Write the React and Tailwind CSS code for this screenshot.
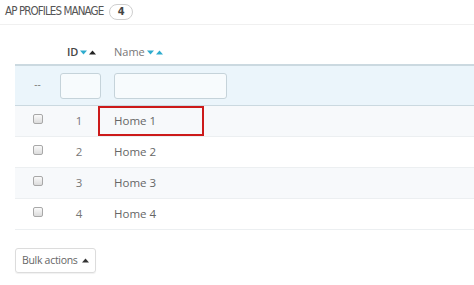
import React from "react";

const Down = ({ c }) => (
  <svg width="7" height="5" viewBox="0 0 7 5" className="inline-block"><path d="M0 0.5h7L3.5 4.5z" fill={c} /></svg>
);
const Up = ({ c }) => (
  <svg width="7" height="5" viewBox="0 0 7 5" className="inline-block"><path d="M0 4.5h7L3.5 0.5z" fill={c} /></svg>
);

const Checkbox = () => (
  <div className="w-[10px] h-[10px] rounded-[2px] border border-[#a8a8a8] bg-gradient-to-b from-[#fafafa] to-[#dcdcdc]" />
);

export default function App() {
  const rows = [1, 2, 3, 4];
  return (
    <div className="w-[474px] h-[285px] bg-white overflow-hidden text-[#666]" style={{ fontFamily: '"Open Sans", sans-serif' }}>
      <div className="h-[25px] border-b border-[#f0f0f0] flex items-center pl-[5px]">
        <span className="text-[11.5px] text-[#555] tracking-[-0.9px]" style={{ fontFamily: '"DejaVu Sans Condensed", "DejaVu Sans", sans-serif' }}>AP PROFILES MANAGE</span>
        <span className="ml-[6px] h-[16px] w-[24px] rounded-full border border-[#cfcfcf] flex items-center justify-center text-[11px] font-bold text-[#444]" style={{ fontFamily: '"DejaVu Sans Condensed", sans-serif' }}>4</span>
      </div>
      <div className="ml-[15px] mt-[15px]">
        <div className="h-[24px] flex items-center text-[11px]">
          <div className="w-[52px]" />
          <div className="w-[47px] flex items-center gap-[2px] font-semibold text-[#444]">
            <span>ID</span><Down c="#2eacce" /><Up c="#222" />
          </div>
          <div className="flex items-center gap-[2px] text-[#777]">
            <span>Name</span><Down c="#2eacce" /><Up c="#2eacce" />
          </div>
        </div>
        <div className="h-[42px] bg-[#ebf5fb] border-t-2 border-b border-[#cbd9e0] flex items-center">
          <div className="w-[45px] flex justify-center text-[10px] text-[#777] -mt-[2px]">--</div>
          <div className="w-[54px]">
            <div className="w-[41px] h-[26px] bg-[#f7fbfd] border border-[#c5d3da] rounded-[3px]" />
          </div>
          <div className="w-[113px] h-[26px] bg-[#f7fbfd] border border-[#c5d3da] rounded-[3px]" />
        </div>
        {rows.map((n) => (
          <div key={n} className={`h-[31px] flex items-center border-b border-[#eceff1] text-[11.5px] ${n % 2 === 1 ? "bg-[#f7f9fb]" : "bg-white"}`}>
            <div className="w-[45px] flex justify-center -mt-[4px]"><Checkbox /></div>
            <div className="w-[38px] text-center text-[#777]">{n}</div>
            {n === 1 ? (
              <div className="w-[106px] h-[30px] border-2 border-[#cc1a1a] flex items-center pl-[14px] text-[#666]">Home 1</div>
            ) : (
              <div className="pl-[16px] text-[#666]">Home {n}</div>
            )}
          </div>
        ))}
        <div className="mt-[18px] inline-flex h-[25px] px-[6px] border border-[#dcdcdc] rounded-[3px] shadow-[0_1px_1px_rgba(0,0,0,0.06)] items-center gap-[4px] text-[10.5px] tracking-[-0.3px] text-[#666]">
          <span>Bulk actions</span><Up c="#333" />
        </div>
      </div>
    </div>
  );
}
